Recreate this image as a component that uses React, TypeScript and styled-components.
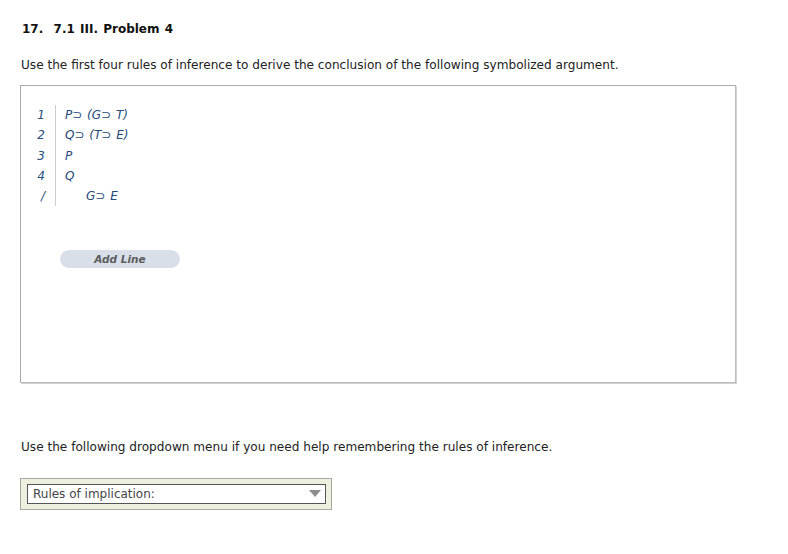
import styled, { createGlobalStyle } from "styled-components";

const Global = createGlobalStyle`
  body {
    margin: 0;
    background: #ffffff;
    font-family: "DejaVu Sans", Verdana, sans-serif;
    color: #222222;
  }
`;

const Page = styled.div`
  padding: 20px 20px 0 20px;
`;

const Title = styled.h1`
  margin: 0 0 0 2px;
  font-size: 12px;
  font-weight: 700;
  line-height: 18px;
  color: #111111;
  word-spacing: 1px;
`;

const Prompt = styled.p`
  margin: 18px 0 0 1px;
  font-size: 12.1px;
  line-height: 18px;
  color: #222222;
`;

const ProofBox = styled.div`
  margin-top: 11px;
  width: 716px;
  height: 298px;
  box-sizing: border-box;
  border: 1px solid #a9a9a9;
  border-right-color: #bdbdbd;
  border-bottom-color: #bdbdbd;
  box-shadow: 1px 1px 0 #d0d0d0;
  padding: 19px 0 0 0;
`;

const Lines = styled.div`
  display: grid;
  grid-template-columns: 35px 1fr;
  width: 200px;
`;

const Num = styled.div`
  font-style: italic;
  font-size: 12px;
  line-height: 20.3px;
  color: #2a4f7d;
  text-align: right;
  padding-right: 10px;
  border-right: 1px solid #cccccc;
`;

const Formula = styled.div<{ $indent?: boolean }>`
  font-style: italic;
  font-size: 12px;
  line-height: 20.3px;
  color: #24497a;
  padding-left: ${(p) => (p.$indent ? "30px" : "9px")};
  white-space: pre;
  word-spacing: 1px;
`;

const AddButton = styled.button`
  display: block;
  margin: 44px 0 0 39px;
  width: 120px;
  height: 18px;
  border: none;
  border-radius: 9px;
  background: #d8dfe9;
  color: #5c5c5c;
  font-family: "DejaVu Sans", Verdana, sans-serif;
  font-size: 10.5px;
  font-weight: 700;
  font-style: italic;
  padding: 0;
`;

const Help = styled.p`
  margin: 55px 0 0 1px;
  font-size: 12.1px;
  line-height: 18px;
  color: #222222;
`;

const SelectFrame = styled.div`
  margin-top: 22px;
  width: 312px;
  height: 32px;
  box-sizing: border-box;
  background: #efefdf;
  border: 1px solid #a8a8a0;
  padding: 5px 5px 0 6px;
`;

const Select = styled.div`
  height: 20px;
  box-sizing: border-box;
  background: #ffffff;
  border: 1px solid #555555;
  display: flex;
  align-items: center;
  justify-content: space-between;
  padding: 0 4px 0 5px;
  font-size: 12px;
  color: #444444;
`;

const lines: [string, string, boolean?][] = [
  ["1", "P\u2283 (G\u2283 T)"],
  ["2", "Q\u2283 (T\u2283 E)"],
  ["3", "P"],
  ["4", "Q"],
  ["/", "G\u2283 E", true],
];

export default function App() {
  return (
    <>
      <Global />
      <Page>
        <Title>17.&nbsp; 7.1 III. Problem 4</Title>
        <Prompt>
          Use the first four rules of inference to derive the conclusion of the following symbolized argument.
        </Prompt>
        <ProofBox>
          <Lines>
            {lines.flatMap(([n, f, ind]) => [
              <Num key={"n" + n}>{n}</Num>,
              <Formula key={"f" + n} $indent={ind}>
                {f}
              </Formula>,
            ])}
          </Lines>
          <AddButton>Add Line</AddButton>
        </ProofBox>
        <Help>Use the following dropdown menu if you need help remembering the rules of inference.</Help>
        <SelectFrame>
          <Select>
            <span>Rules of implication:</span>
            <svg width="12" height="8" viewBox="0 0 12 8">
              <path d="M0 0 H12 L6 7 Z" fill="#8c8c8c" />
            </svg>
          </Select>
        </SelectFrame>
      </Page>
    </>
  );
}
